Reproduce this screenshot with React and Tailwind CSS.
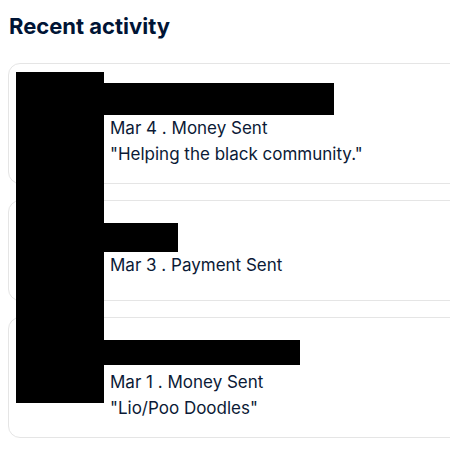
import React from 'react';

const activity = [
  { id: 1, date: 'Mar 4 . Money Sent', note: '"Helping the black community."', h: 'h-[121px]' },
  { id: 2, date: 'Mar 3 . Payment Sent', note: null, h: 'h-[101px]' },
  { id: 3, date: 'Mar 1 . Money Sent', note: '"Lio/Poo Doodles"', h: 'h-[121px]' },
];

const ActivityCard = ({ item }) => (
  <div className={`${item.h} w-[460px] rounded-[12px] border border-[#e5e5e5] bg-white pt-[51px] pl-[101px]`}>
    <p className="text-[17px] leading-[26px] text-[#0b1a36]">{item.date}</p>
    {item.note && <p className="text-[17px] leading-[26px] text-[#0b1a36]">{item.note}</p>}
  </div>
);

export default function App() {
  return (
    <div
      className="relative w-[450px] h-[450px] overflow-hidden bg-white"
      style={{ fontFamily: 'Inter, "Liberation Sans", sans-serif' }}
    >
      <h2 className="pl-[9px] pt-[12px] text-[22px] leading-[28px] font-bold text-[#001435]">
        Recent activity
      </h2>
      <div className="mt-[23px] pl-[8px] flex flex-col gap-4">
        {activity.map((item) => (
          <ActivityCard key={item.id} item={item} />
        ))}
      </div>

      {/* redactions */}
      <div className="absolute left-[16px] top-[72px] w-[88px] h-[331px] bg-black" />
      <div className="absolute left-[104px] top-[83px] w-[230px] h-[32px] bg-black" />
      <div className="absolute left-[104px] top-[223px] w-[74px] h-[29px] bg-black" />
      <div className="absolute left-[104px] top-[340px] w-[196px] h-[25px] bg-black" />
    </div>
  );
}
